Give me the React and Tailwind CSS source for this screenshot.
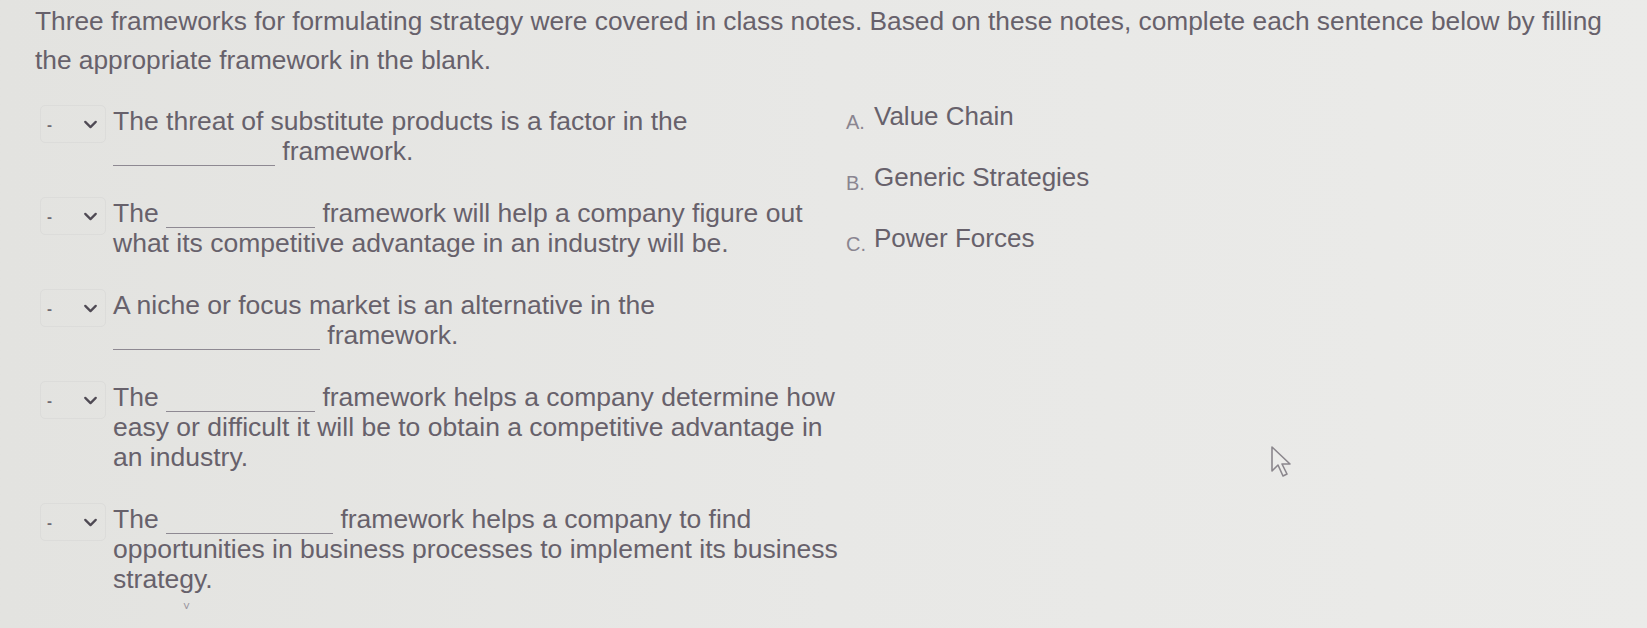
import React from 'react';
import { ChevronDown } from 'lucide-react';

const ink = 'text-[#67616b]';

function Blank({ w }) {
  return <span className={`inline-block h-[20px] ${w} border-b border-[#8e8992] mb-[-6px]`} />;
}

function Select() {
  return (
    <div className="flex items-center justify-between w-[66px] h-[38px] shrink-0 rounded-[5px] border border-[#dcdcda] pl-[6px] pr-[4px] mt-[-1px]">
      <span className="text-[15px] font-bold leading-none text-[#6f6a73]">-</span>
      <ChevronDown className="h-[21px] w-[21px] text-[#4f4a54]" strokeWidth={2.6} />
    </div>
  );
}

function Item({ children }) {
  return (
    <div className="flex items-start gap-[7px]">
      <Select />
      <p className={`text-[26.5px] leading-[30px] ${ink} whitespace-nowrap`}>{children}</p>
    </div>
  );
}

function Option({ letter, label }) {
  return (
    <div className="flex items-baseline">
      <span className="w-[28px] text-[20px] text-[#8a8590] translate-y-[4px]">{letter}</span>
      <span className={`text-[26px] leading-[30px] ${ink}`}>{label}</span>
    </div>
  );
}

export default function App() {
  return (
    <div
      className="relative w-[1647px] h-[628px] overflow-hidden bg-gradient-to-r from-[#e3e3e0] via-[#e8e8e6] to-[#ebebe9] pl-[35px] pt-[2px]"
      style={{ fontFamily: '"Liberation Sans", Arial, sans-serif' }}
    >
      {/* question prompt */}
      <p className={`text-[26.3px] leading-[39px] ${ink}`}>
        Three frameworks for formulating strategy were covered in class notes. Based on these notes, complete each sentence below by filling
        <br />
        the appropriate framework in the blank.
      </p>

      <div className="flex mt-[26px] ml-[5px]">
        {/* matching statements */}
        <div className="flex flex-col gap-[32px] w-[806px]">
          <Item>
            The threat of substitute products is a factor in the
            <br />
            <Blank w="w-[162px]" /> framework.
          </Item>
          <Item>
            The <Blank w="w-[149px]" /> framework will help a company figure out
            <br />
            what its competitive advantage in an industry will be.
          </Item>
          <Item>
            A niche or focus market is an alternative in the
            <br />
            <Blank w="w-[207px]" /> framework.
          </Item>
          <Item>
            The <Blank w="w-[149px]" /> framework helps a company determine how
            <br />
            easy or difficult it will be to obtain a competitive advantage in
            <br />
            an industry.
          </Item>
          <Item>
            The <Blank w="w-[167px]" /> framework helps a company to find
            <br />
            opportunities in business processes to implement its business
            <br />
            strategy.
          </Item>
        </div>

        {/* answer choices */}
        <div className="flex flex-col gap-[29px] mt-[-5px]">
          <Option letter="A." label="Value Chain" />
          <Option letter="B." label="Generic Strategies" />
          <Option letter="C." label="Power Forces" />
        </div>
      </div>

      <span className="absolute left-[183px] top-[598px] text-[12px] text-[#9a959e]">˅</span>

      {/* mouse pointer */}
      <svg className="absolute left-[1270px] top-[445px]" width="26" height="36" viewBox="0 0 26 36">
        <path
          d="M2 2 L2 26 L8 20 L13 31 L17 29 L12 19 L20 19 Z"
          fill="#ececea"
          stroke="#8b878d"
          strokeWidth="1.6"
          strokeLinejoin="round"
        />
      </svg>
    </div>
  );
}
